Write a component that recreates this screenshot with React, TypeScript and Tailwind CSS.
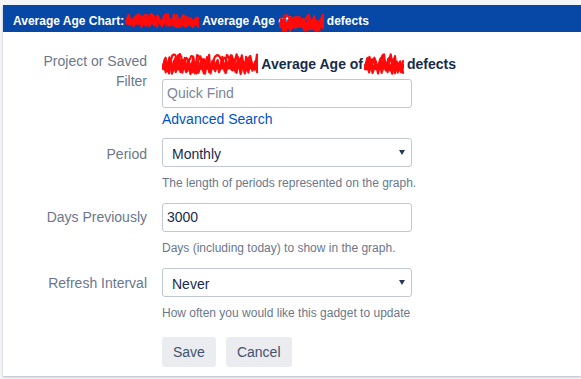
import React from "react";

function Scribble({ w, h, seed, left = 0, top = 0 }: { w: number; h: number; seed: number; left?: number; top?: number }) {
  let s = seed;
  const rnd = () => {
    s = (s * 9301 + 49297) % 233280;
    return s / 233280;
  };
  const paths: string[] = [];
  for (let k = 0; k < 4; k++) {
    let x = 1;
    let d = `M1 ${(h * 0.6).toFixed(1)}`;
    let up = false;
    while (x < w - 1) {
      x += 1.2 + rnd() * 2.2;
      up = !up;
      const spike = rnd() < 0.22;
      const y = spike ? 1 + rnd() * h * 0.25 : up ? h * 0.3 + rnd() * h * 0.25 : h * 0.65 + rnd() * h * 0.3;
      d += ` L${Math.min(x, w - 1).toFixed(1)} ${y.toFixed(1)}`;
    }
    paths.push(d);
  }
  return (
    <svg
      className="absolute"
      style={{ left, top }}
      width={w}
      height={h}
      viewBox={`0 0 ${w} ${h}`}
    >
      {paths.map((d, i) => (
        <path key={i} d={d} stroke="#ff0a0a" strokeWidth={2.2} fill="none" strokeLinejoin="round" strokeLinecap="round" />
      ))}
      <path d={`M2 ${h * 0.68} L${w - 2} ${h * 0.62}`} stroke="#ff0a0a" strokeWidth={h * 0.22} strokeLinecap="round" />
    </svg>
  );
}

function Caret() {
  return (
    <svg className="absolute right-[6px] top-[11px]" width="6" height="5" viewBox="0 0 6 5">
      <path d="M0 0 L6 0 L3 5 Z" fill="#253858" />
    </svg>
  );
}

export default function App() {
  return (
    <div className="min-h-screen bg-[#f4f5f7] pt-[5px] pl-[3px] font-['Liberation_Sans',Arial,sans-serif]">
      <div className="bg-white shadow-[0_1px_2px_rgba(9,30,66,0.28)] pb-[9px]">
        <div className="h-[27px] bg-[#0747a6] pl-[10px] pt-[9px] text-[12px] leading-[14px] font-bold text-white whitespace-nowrap">
          {"Average Age Chart: "}
          <span className="relative inline-block align-top w-[72px] h-[14px]">
            <Scribble w={74} h={15} seed={7} left={-2} top={-1} />
          </span>
          {" Average Age of"}
          <span className="relative inline-block align-top w-[34px] h-[14px]">
            <Scribble w={45} h={19} seed={19} left={-11} top={-1} />
          </span>
          {" defects"}
        </div>

        <div className="pt-[19px] text-[14px]">
          {/* Row 1 */}
          <div className="flex gap-[15px]">
            <div className="w-[144px] text-right leading-[20px] text-[#6b778c]">
              Project or Saved
              <br />
              Filter
            </div>
            <div className="w-[250px]">
              <div className="mt-[3px] leading-[20px] font-bold text-[#172b4d] whitespace-nowrap">
                <span className="relative inline-block align-top w-[96px] h-[20px]">
                  <Scribble w={96} h={22} seed={3} left={0} top={-1} />
                </span>
                {" Average Age of"}
                <span className="relative inline-block align-top w-[40px] h-[20px]">
                  <Scribble w={40} h={22} seed={11} left={1} top={-1} />
                </span>
                {" defects"}
              </div>
              <div className="mt-[5px] h-[29px] border border-[#c1c7d0] rounded-[3px] pl-[4px] pt-[3px] leading-[20px] text-[#7a869a]">
                Quick Find
              </div>
              <div className="mt-[1px] leading-[20px] text-[#0052cc]">Advanced Search</div>
            </div>
          </div>

          {/* Row 2 */}
          <div className="flex gap-[15px] mt-[9px]">
            <div className="w-[144px] text-right leading-[20px] pt-[6px] text-[#6b778c]">Period</div>
            <div className="w-[250px]">
              <div className="relative h-[29px] border border-[#c1c7d0] rounded-[3px] pl-[9px] pt-[5px] leading-[20px] text-[#172b4d]">
                Monthly
                <Caret />
              </div>
              <div className="mt-[8px] text-[12px] leading-[16px] text-[#6b778c] whitespace-nowrap">
                The length of periods represented on the graph.
              </div>
            </div>
          </div>

          {/* Row 3 */}
          <div className="flex gap-[15px] mt-[12px]">
            <div className="w-[144px] text-right leading-[20px] pt-[4px] text-[#6b778c]">Days Previously</div>
            <div className="w-[250px]">
              <div className="h-[29px] border border-[#c1c7d0] rounded-[3px] pl-[4px] pt-[3px] leading-[20px] text-[#172b4d]">
                3000
              </div>
              <div className="mt-[8px] text-[12px] leading-[16px] text-[#6b778c] whitespace-nowrap">
                Days (including today) to show in the graph.
              </div>
            </div>
          </div>

          {/* Row 4 */}
          <div className="flex gap-[15px] mt-[12px]">
            <div className="w-[144px] text-right leading-[20px] pt-[5px] text-[#6b778c]">Refresh Interval</div>
            <div className="w-[250px]">
              <div className="relative h-[29px] border border-[#c1c7d0] rounded-[3px] pl-[9px] pt-[5px] leading-[20px] text-[#172b4d]">
                Never
                <Caret />
              </div>
              <div className="mt-[8px] text-[12px] leading-[16px] text-[#6b778c] whitespace-nowrap">
                How often you would like this gadget to update
              </div>
            </div>
          </div>

          {/* Buttons */}
          <div className="flex gap-[15px] mt-[16px]">
            <div className="w-[144px]" />
            <div className="flex gap-[10px]">
              <button className="h-[30px] px-[11px] rounded-[3px] bg-[#ebecf0] text-[#42526e] leading-[20px]">Save</button>
              <button className="h-[30px] px-[11px] rounded-[3px] bg-[#ebecf0] text-[#42526e] leading-[20px]">Cancel</button>
            </div>
          </div>
        </div>
      </div>
    </div>
  );
}
